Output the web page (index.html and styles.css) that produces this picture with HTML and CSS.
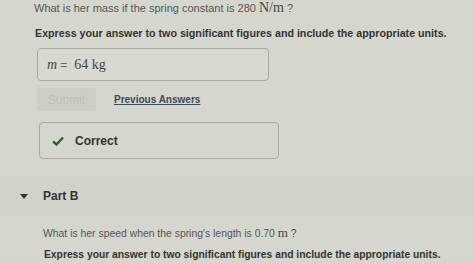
FILE: index.html
```html
<!DOCTYPE html>
<html lang="en">
<head>
    <meta charset="UTF-8">
    <meta name="viewport" content="width=device-width, initial-scale=1.0">
    <title>Part A / Part B</title>
    <link rel="stylesheet" href="styles.css">
</head>
<body>

    <div class="part" id="part-a">
        <p class="question">What is her mass if the spring constant is 280 <span class="math">N/m</span> ?</p>
        <p class="instructions">Express your answer to two significant figures and include the appropriate units.</p>

        <div class="answer-box">
            <span class="var">m</span> <span class="eq">=</span> <span class="math">64 kg</span>
        </div>

        <div class="actions">
            <button class="submit" disabled>Submit</button>
            <a href="#" class="prev-link">Previous Answers</a>
        </div>

        <div class="feedback">
            <svg class="check" width="12" height="10" viewBox="0 0 12 10">
                <path d="M1 5.5 L4.5 8.5 L11 1.5" fill="none" stroke="#2f5d36" stroke-width="2.4"/>
            </svg>
            <span>Correct</span>
        </div>
    </div>

    <div class="part-header">
        <span class="caret"></span>
        <span class="part-title">Part B</span>
    </div>

    <div class="part" id="part-b">
        <p class="question">What is her speed when the spring's length is 0.70 <span class="math">m</span> ?</p>
        <p class="instructions">Express your answer to two significant figures and include the appropriate units.</p>
    </div>

</body>
</html>
```

FILE: styles.css
```css
body {
    font-family: "Liberation Sans", Arial, sans-serif;
    margin: 0;
    padding: 0;
    background: #d5d7cf;
    color: #444;
    overflow: hidden;
}
.part {
    padding-left: 34px;
}
.question {
    font-size: 11px;
    color: #555;
    margin: 0;
    line-height: 15px;
}
.instructions {
    font-size: 10.7px;
    font-weight: bold;
    color: #333;
    margin: 10px 0 0 1px;
    line-height: 14px;
}
.math {
    font-family: "Liberation Serif", "Times New Roman", serif;
    font-size: 14px;
    color: #444;
}
.var {
    font-family: "Liberation Serif", serif;
    font-style: italic;
    font-size: 14px;
}
.eq {
    font-size: 12px;
    color: #666;
    margin-right: 4px;
}
.answer-box {
    width: 221px;
    height: 31px;
    margin: 8px 0 0 3px;
    padding-left: 9px;
    display: flex;
    align-items: center;
    gap: 3px;
    border: 1px solid #a9aaa3;
    border-radius: 4px;
    background: #d8dad2;
}
.actions {
    display: flex;
    align-items: center;
    gap: 18px;
    margin: 7px 0 0 3px;
}
.submit {
    width: 59px;
    height: 23px;
    background: #cdcfc6;
    color: #bfc1b8;
    border: none;
    border-radius: 2px;
    font-family: inherit;
    font-size: 12px;
    padding: 0;
}
.prev-link {
    font-size: 10px;
    font-weight: bold;
    color: #3d4a5a;
    text-decoration: underline;
}
.feedback {
    width: 226px;
    height: 35px;
    margin: 11px 0 0 5px;
    padding-left: 12px;
    display: flex;
    align-items: center;
    gap: 11px;
    border: 1px solid #a9aaa3;
    border-radius: 4px;
    font-size: 12px;
    font-weight: bold;
    color: #333;
}
.part-header {
    margin-top: 17px;
    height: 40px;
    display: flex;
    align-items: center;
    padding-left: 20px;
    gap: 15px;
    background: #d1d3cb;
}
.caret {
    width: 0;
    height: 0;
    border-left: 4px solid transparent;
    border-right: 4px solid transparent;
    border-top: 5px solid #333;
}
.part-title {
    font-size: 12px;
    font-weight: bold;
    color: #333;
}
#part-b {
    padding-left: 43px;
}
#part-b .question {
    margin-top: 9px;
    font-size: 10.4px;
}
#part-b .question .math {
    font-size: 13px;
}
#part-b .instructions {
    margin-top: 7px;
    font-size: 10.3px;
}
```
